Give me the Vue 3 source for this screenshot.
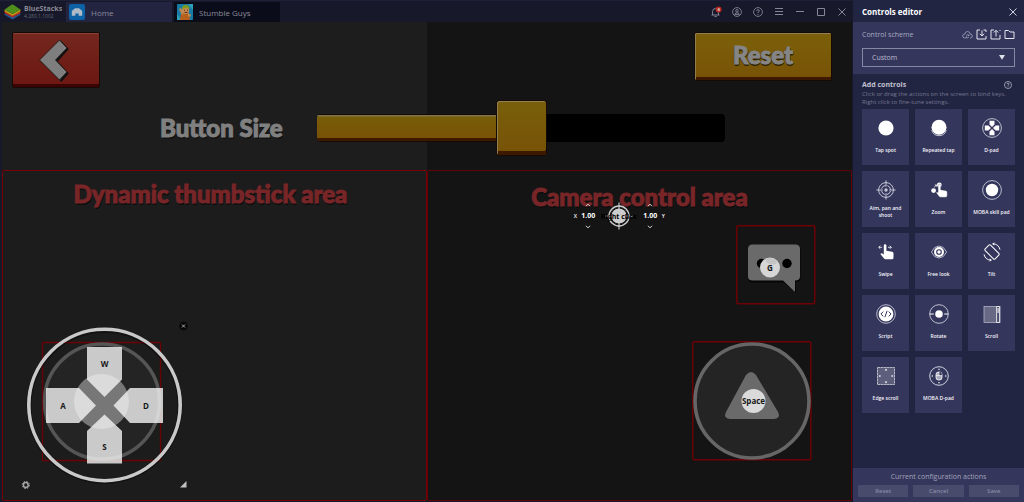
<script setup>
import { ref } from 'vue'

const size = ref(50)
const scheme = ref('Custom')
const sensX = ref('1.00')
const sensY = ref('1.00')

const tiles = [
  { icon: 'tap', label: 'Tap spot' },
  { icon: 'repeat', label: 'Repeated tap' },
  { icon: 'dpad', label: 'D-pad' },
  { icon: 'aim', label: 'Aim, pan and shoot' },
  { icon: 'zoom', label: 'Zoom' },
  { icon: 'skill', label: 'MOBA skill pad' },
  { icon: 'swipe', label: 'Swipe' },
  { icon: 'look', label: 'Free look' },
  { icon: 'tilt', label: 'Tilt' },
  { icon: 'script', label: 'Script' },
  { icon: 'rotate', label: 'Rotate' },
  { icon: 'scroll', label: 'Scroll' },
  { icon: 'edge', label: 'Edge scroll' },
  { icon: 'moba', label: 'MOBA D-pad' }
]
</script>

<template>
  <svg class="sprite" aria-hidden="true">
    <symbol id="tap" viewBox="0 0 20 20"><circle cx="10" cy="10" r="7.6" fill="#fff" /></symbol>
    <symbol id="repeat" viewBox="0 0 20 20">
      <circle cx="10" cy="9.3" r="7.5" fill="#fff" />
      <path d="M2.7 12.2a7.6 7.6 0 0 0 14.6 0" fill="none" stroke="#e4e4ee" stroke-width=".8" />
    </symbol>
    <symbol id="dpad" viewBox="0 0 20 20">
      <circle cx="10" cy="10" r="9.4" fill="none" stroke="#dcdce8" stroke-width=".8" />
      <path d="M7.5 2.8h5v3.6L10 9 7.5 6.4zM7.5 17.2h5v-3.6L10 11l-2.5 2.6zM2.8 7.5v5h3.6L9 10 6.4 7.5zM17.2 7.5v5h-3.6L11 10l2.6-2.5z" fill="#fff" />
    </symbol>
    <symbol id="aim" viewBox="0 0 20 20">
      <g fill="none" stroke="#d4d4e2" stroke-width=".9">
        <circle cx="10" cy="10" r="7.4" /><circle cx="10" cy="10" r="4.6" stroke-dasharray="5.2 2" stroke-dashoffset="-1" />
        <path d="M10 .4v6.4M10 13.2v6.4M.4 10h6.4M13.2 10h6.4" />
      </g>
      <circle cx="10" cy="10" r="1.7" fill="#c5c5d5" />
    </symbol>
    <symbol id="zoom" viewBox="0 0 20 20">
      <circle cx="4.6" cy="10.6" r="2.4" fill="#fff" />
      <circle cx="10.3" cy="5" r="2.4" fill="#fff" />
      <path d="M5.2 7.2 7.4 5M7.4 5H5.8M7.4 5v1.6" stroke="#fff" stroke-width=".8" fill="none" />
      <path d="M9.1 5.5a1.3 1.3 0 0 1 2.6 0v4.2l5.4 1q1.2.3 1.1 1.5v3.2q0 1.8-1.2 1.8h-5.4q-1 0-1.6-.8l-2.9-3.8q.8-1 2-.2z" fill="#fff" stroke="#34365c" stroke-width=".3" />
    </symbol>
    <symbol id="skill" viewBox="0 0 20 20">
      <circle cx="10" cy="10" r="9.4" fill="none" stroke="#dcdce8" stroke-width=".8" /><circle cx="10" cy="10" r="6.2" fill="#fff" />
    </symbol>
    <symbol id="swipe" viewBox="0 0 20 20">
      <path d="M7.8 3.6a1.3 1.3 0 0 1 2.6 0v5.2l5.7 1q1.4.3 1.4 1.6v4.4q0 1.5-1.4 1.5H9.6q-1 0-1.6-.8l-3.6-4.5q.8-1.1 2-.4l1.4.9z" fill="#fff" />
      <path d="M2.9 5.3h3.2M4.3 3.7 2.7 5.3l1.6 1.6M12 5.3h3.2M13.8 3.7l1.6 1.6-1.6 1.6" fill="none" stroke="#fff" stroke-width=".8" />
    </symbol>
    <symbol id="look" viewBox="0 0 20 20">
      <path d="M2.4 10Q5.2 4 10 4t7.6 6Q14.8 16 10 16t-7.6-6z" fill="none" stroke="#d8d8e4" stroke-width=".8" />
      <circle cx="10" cy="10" r="5" fill="#fff" /><circle cx="10" cy="10" r="2.3" fill="#fff" stroke="#34365c" stroke-width="1.1" />
    </symbol>
    <symbol id="tilt" viewBox="0 0 20 20">
      <g fill="none" stroke="#fff" stroke-width="1">
        <rect x="6.2" y="3" width="7.6" height="14" rx="1.2" transform="rotate(-45 10 10)" />
        <path d="M10.8 1.8q5.8.2 7.2 5.8M9.2 18.2q-5.8-.2-7.2-5.8M12.4.9 10.8 1.8l1.2 1.4M7.6 19.1l1.6-.9L8 16.8" />
      </g>
    </symbol>
    <symbol id="script" viewBox="0 0 20 20">
      <circle cx="10" cy="10" r="9.3" fill="none" stroke="#dcdce8" stroke-width=".8" /><circle cx="10" cy="10" r="7.4" fill="#fff" />
      <path d="M7.3 7.6 4.9 10l2.4 2.4M12.7 7.6l2.4 2.4-2.4 2.4M11.1 6.8 8.9 13.2" fill="none" stroke="#34365c" />
    </symbol>
    <symbol id="rotate" viewBox="0 0 20 20">
      <circle cx="10" cy="10" r="9.3" fill="none" stroke="#e4e4ee" stroke-width=".8" />
      <path d="M.8 10h4M15.2 10h4" stroke="#fff" /><circle cx="10" cy="10" r="3.8" fill="#fff" />
    </symbol>
    <symbol id="scroll" viewBox="0 0 20 20">
      <rect x="2" y="2.5" width="16" height="16" fill="#686985" stroke="#b0b0c2" stroke-width=".8" />
      <path d="M14.6 2.5v16h3v-16z" fill="#4c4e70" stroke="#fff" stroke-width=".8" /><path d="M16.1 4v5" stroke="#fff" />
    </symbol>
    <symbol id="edge" viewBox="0 0 20 20">
      <rect x="1.5" y="1.5" width="17" height="17" fill="#5c5e7c" stroke="#c4c4d2" stroke-width=".9" stroke-dasharray="2.6 .4" />
      <path d="M10 2.6 11.3 4.4H8.7zM10 17.4l1.3-1.8H8.7zM2.6 10l1.8-1.3v2.6zM17.4 10l-1.8-1.3v2.6z" fill="#fff" />
    </symbol>
    <symbol id="moba" viewBox="0 0 20 20">
      <circle cx="10" cy="10" r="9.3" fill="none" stroke="#e4e4ee" stroke-width=".9" />
      <rect x="7" y="6" width="6" height="8" rx="2.6" fill="#a9a9bc" stroke="#fff" stroke-width=".8" />
      <path d="M10 6h1.4Q13 6.6 13 9.4h-3z" fill="#34365c" /><path d="M10 6v3.6M7 9.6h6" stroke="#fff" stroke-width=".7" />
      <path d="m10 2.2 1 1.5H9zM10 17.8l1-1.5H9zM2.2 10l1.5-1v2zM17.8 10l-1.5-1v2z" fill="#fff" />
    </symbol>
    <symbol id="help" viewBox="0 0 10 10">
      <circle cx="5" cy="5" r="4.4" fill="none" stroke="currentColor" stroke-width=".9" />
      <path d="M3.6 4q.1-1.3 1.4-1.3T6.4 3.9Q6.4 4.6 5 5.2V6" fill="none" stroke="currentColor" stroke-width=".9" />
      <circle cx="5" cy="7.3" r=".6" fill="currentColor" />
    </symbol>
    <symbol id="cross" viewBox="0 0 10 10"><path d="m1.5 1.5 7 7M8.5 1.5l-7 7" stroke="currentColor" fill="none" /></symbol>
  </svg>

  <div class="app">
    <main class="player">
      <header class="bar">
        <div class="brand">
          <svg width="17" height="16" viewBox="0 0 17 16" aria-hidden="true">
            <path d="M.6 10.8 8.5 15.4 16.4 10.8V9.4L8.5 13 .6 9.4z" fill="#1d5b9b" />
            <path d="M.6 9.2 8.5 13.6 16.4 9.2V7.6L8.5 11 .6 7.6z" fill="#b52d24" />
            <path d="M.6 7.4 8.5 11.8 16.4 7.4V5.6L8.5 10 .6 5.6z" fill="#c09c12" />
            <path d="M.6 5.6 7.4.8q1-.5 2 0l7 4.8-6.9 4q-1 .5-2 0z" fill="#4f8e1c" />
          </svg>
          <div class="names"><strong>BlueStacks</strong><span>4.280.1.1002</span></div>
        </div>
        <nav class="tabs">
          <a href="#home" class="tab home">
            <svg width="16" height="16" viewBox="0 0 16 16" aria-hidden="true">
              <rect width="16" height="16" rx="2" fill="#0d62a5" />
              <path d="M2.8 7 6 4.2h4L13.2 7v4.8H9.6V9.4H6.4v2.4H2.8z" fill="#aebac6" />
            </svg>Home</a>
          <a href="#game" class="tab game-tab">
            <svg width="16" height="16" viewBox="0 0 16 16" aria-hidden="true">
              <rect width="16" height="16" rx="1" fill="#177ba5" />
              <path d="M0 10 5 16H0zM11 0h5v6z" fill="#2fa0b8" />
              <path d="M4 10q4-3 8 0l1 6H3z" fill="#b5601c" />
              <path d="M2 5l2-1 2 6-1 1zM11 9l3 2-1 2-2-1z" fill="#c98a4c" />
              <circle cx="8.5" cy="6.5" r="3.6" fill="#c7894f" />
              <path d="M4.8 5q.2-4 4-4 3.6 0 3.8 4L9 4z" fill="#7d9a22" />
              <path d="M7 6.2h1M10 6.2h1M7.5 8.4h3" stroke="#46281c" stroke-width=".9" />
            </svg>Stumble Guys</a>
        </nav>
        <div class="window">
          <button aria-label="Notifications">
            <svg width="12" height="12" viewBox="0 0 12 12"><path d="M1.5 9h8M2.6 9V5.4q.2-3 3-3 2.6 0 2.8 3V9M4.500 10.600h2.200" fill="none" stroke="currentColor" /><circle cx="8.600" cy="3.600" r="3" fill="#b5291f" /><path d="M9 2 7.600 4.100h2.200M9.100 2.200v3" fill="none" stroke="#ddd" stroke-width=".7" /></svg>
          </button>
          <button aria-label="Account">
            <svg width="10" height="10" viewBox="0 0 10 10" fill="none" stroke="currentColor"><circle cx="5" cy="5" r="4.4" stroke-width=".9" /><circle cx="5" cy="3.8" r="1.3" stroke-width=".9" /><path d="M2.8 7.5q.2-1.8 2.2-1.8t2.2 1.8z" stroke-width=".9" /></svg>
          </button>
          <button aria-label="Help"><svg width="10" height="10"><use href="#help" /></svg></button>
          <button aria-label="Menu"><svg width="10" height="10" viewBox="0 0 10 10"><path d="M1 1.500h8M1 4.500h8M1 7.500h8" stroke="currentColor" /></svg></button>
          <button aria-label="Minimize"><svg width="10" height="10" viewBox="0 0 10 10"><path d="M1 4.500h8" stroke="currentColor" /></svg></button>
          <button aria-label="Maximize"><svg width="10" height="10" viewBox="0 0 10 10"><path d="M1.500 1.500h7v7h-7z" stroke="currentColor" fill="none" /></svg></button>
          <button aria-label="Close"><svg width="10" height="10"><use href="#cross" /></svg></button>
        </div>
      </header>

      <div class="game">
        <section class="settings">
          <div class="row">
            <button class="block back" aria-label="Back">
              <svg width="32" height="44" viewBox="0 0 32 44"><path d="M22 1.500 1.500 22 22.500 43 30 34.500 19 22.500 30 10z" fill="#111" transform="translate(.8 1)" /><path d="M21.500 2 1.500 22 21.500 42 29 34 17.500 22 29 10z" fill="#7e7e7e" stroke="#1a1212" stroke-width=".8" /></svg>
            </button>
            <button class="block reset">Reset</button>
          </div>
          <div class="size">
            <label for="size">Button Size</label>
            <input id="size" v-model="size" type="range" min="0" max="100" :style="{ '--fill': size + '%' }">
          </div>
        </section>

        <section class="areas">
          <div class="area left">
            <h2>Dynamic thumbstick area</h2>
            <svg class="stick" width="172" height="174" viewBox="18 318 172 174">
              <rect x="42.500" y="342.500" width="118" height="118" rx="1" fill="none" stroke="#6c0004" stroke-width="1.300" />
              <circle cx="102" cy="401.500" r="57.500" fill="#242424" stroke="#555" stroke-width="3.500" />
              <circle cx="104.500" cy="406" r="75.500" fill="none" stroke="#000" stroke-opacity=".35" stroke-width="5" />
              <circle cx="104.500" cy="405" r="75.700" fill="none" stroke="#c9c9c9" stroke-width="3.600" />
              <circle cx="101.500" cy="401.500" r="27.500" fill="#777" />
              <path d="M87 347h35v32.500l-17.500 17.500L87 379.500zM87 463.500h35V431l-17.500-16.500L87 431zM46 388v35h33l17-17.500L79 388zM163 388v35h-33l-16.500-17.500L130 388z" fill="#f4f4f4" fill-opacity=".8" />
              <g><text x="104.500" y="367">W</text><text x="63" y="408.500">A</text><text x="146" y="408.500">D</text><text x="104.500" y="450">S</text></g>
              <circle cx="183.500" cy="326" r="4.300" fill="#080808" />
              <path d="m182 324.500 3 3M185 324.500l-3 3" stroke="#bbb" stroke-width=".9" />
              <circle cx="25.800" cy="485" r="2.400" fill="none" stroke="#a5a5a5" stroke-width="1.500" />
              <circle cx="25.800" cy="485" r="3.600" fill="none" stroke="#a5a5a5" stroke-width="1" stroke-dasharray="1.500 1.330" />
              <path d="M186.500 481v6.500h-6.500z" fill="#c0c0c0" />
            </svg>
          </div>
          <div class="area right">
            <h2>Camera control area</h2>
            <div class="aim">
              <label for="sx">X</label>
              <div class="step">
                <button aria-label="Increase X"><svg width="6" height="4" viewBox="0 0 6 4"><path d="m.8 3.200 2.200-2 2.200 2" fill="none" stroke="#ccc" /></svg></button>
                <input id="sx" v-model="sensX">
                <button aria-label="Decrease X"><svg width="6" height="4" viewBox="0 0 6 4"><path d="m.8.8 2.200 2 2.200-2" fill="none" stroke="#ccc" /></svg></button>
              </div>
              <svg class="target" width="42" height="30" viewBox="0 0 42 30">
                <circle cx="21" cy="15" r="10" fill="none" stroke="#ccc" stroke-width="1.400" />
                <circle cx="21" cy="15" r="8" fill="#ccc" stroke="#111" stroke-width="1" />
                <path d="M21 1.500v7M21 21.500v7M7.500 15h6M28.500 15h6" stroke="#ddd" />
                <text x="21" y="18">Right click</text>
              </svg>
              <div class="step">
                <button aria-label="Increase Y"><svg width="6" height="4" viewBox="0 0 6 4"><path d="m.8 3.200 2.200-2 2.200 2" fill="none" stroke="#ccc" /></svg></button>
                <input id="sy" v-model="sensY">
                <button aria-label="Decrease Y"><svg width="6" height="4" viewBox="0 0 6 4"><path d="m.8.8 2.200 2 2.200-2" fill="none" stroke="#ccc" /></svg></button>
              </div>
              <label for="sy">Y</label>
            </div>
            <svg class="chat" width="80" height="80" viewBox="0 0 80 80">
              <rect x=".8" y=".8" width="78" height="78" rx="1.500" fill="none" stroke="#6c0004" stroke-width="1.500" />
              <path d="M17 20h43q4.500 0 4.500 5v28q0 4-5 4l.5 11-12-10.500H17q-4.500 0-4.500-4V24q0-4 4.500-4z" fill="#050505" />
              <path d="M16.500 19.500h43q4.500 0 4.500 4.500v27.500q0 4-5 4v11.500L47 55.500H16.500q-4.500 0-4.500-4V24q0-4.500 4.500-4.500z" fill="#6a6a6a" />
              <circle cx="25.500" cy="38.500" r="4.700" /><circle cx="51" cy="38.500" r="4.700" />
              <circle cx="34" cy="42.500" r="10" fill="#d6d6d6" /><path d="M29 34q2 7 11 5l1-3q-6-5-12-2z" fill="#c4c4c4" />
              <text x="34" y="46">G</text>
            </svg>
            <svg class="jump" width="120" height="120" viewBox="0 0 120 120">
              <rect x=".8" y=".8" width="118" height="118" rx="1.500" fill="none" stroke="#6c0004" stroke-width="1.500" />
              <circle cx="60" cy="60" r="57" fill="#242424" stroke="#666" stroke-width="3.600" />
              <path d="M54 34q5-6 10 0l22 37q3 6-4 7H38q-7-1-4-7z" fill="#6a6a6a" />
              <circle cx="61.500" cy="60" r="12" fill="#dadada" />
              <text x="61.500" y="63">Space</text>
            </svg>
          </div>
        </section>
      </div>
    </main>

    <aside class="editor">
      <header class="title"><h1>Controls editor</h1><button aria-label="Close editor"><svg width="10" height="10"><use href="#cross" /></svg></button></header>
      <section class="scheme">
        <div class="line">
          <label for="scheme">Control scheme</label>
          <div class="tools">
            <button aria-label="Cloud sync"><svg width="11" height="10" viewBox="0 0 11 10" fill="none" stroke="#a5a5bb" stroke-width=".8"><path d="M3.500 8H2.600Q.6 7.800.6 6T2.800 4.200Q3 1.500 5.500 1.500T8.200 4.200Q10.400 4.200 10.400 6T8.500 8H8M4.200 5.400q1.500-1.400 2.700.1M6.800 7.200q-1.400 1.400-2.700 0M7 4.500v1.200H5.800M4 8.200V7h1.200" /></svg></button>
            <button aria-label="Import"><svg width="11" height="11" viewBox="0 0 11 11" fill="none" stroke="#e6e6f0"><path d="M4 1H1v9h9V7M7.500 1H10v2M6 1.500v5M3.800 4.800 6 7l2.200-2.200" /></svg></button>
            <button aria-label="Export"><svg width="11" height="11" viewBox="0 0 11 11" fill="none" stroke="#e6e6f0"><path d="M4 1H1v9h9V6M10 1v1M6 7.500v-6M3.800 3.500 6 1.300l2.200 2.200" /></svg></button>
            <button aria-label="Open folder"><svg width="11" height="11" viewBox="0 0 11 11" fill="none" stroke="#e6e6f0"><path d="M1 1.500h3.500L6 3h4v6.500H1z" /></svg></button>
          </div>
        </div>
        <div class="pick">
          <select id="scheme" v-model="scheme"><option>Custom</option></select>
          <svg width="6" height="5" viewBox="0 0 6 5" aria-hidden="true"><path d="M0 0h6L3 4.800z" fill="#e0e0ea" /></svg>
        </div>
      </section>
      <section class="add">
        <div class="line"><h2>Add controls</h2><button aria-label="About controls"><svg width="8" height="8"><use href="#help" /></svg></button></div>
        <p>Click or drag the actions on the screen to bind keys.<br>Right click to fine-tune settings.</p>
        <div class="tiles">
          <button v-for="t in tiles" :key="t.icon" class="tile">
            <svg width="20" height="20"><use :href="'#' + t.icon" /></svg>
            <span>{{ t.label }}</span>
          </button>
        </div>
      </section>
      <footer>
        <p>Current configuration actions</p>
        <div class="acts"><button>Reset</button><button>Cancel</button><button>Save</button></div>
      </footer>
    </aside>
  </div>
</template>

<style>
body { background: #171829; }
</style>

<style scoped>
* { box-sizing: border-box; }
.sprite { position: absolute; width: 0; height: 0; }
.app { display: grid; grid-template-columns: 1fr 171px; min-height: 100vh; font-family: "Open Sans", "Noto Sans", sans-serif; }
button { border: 0; padding: 0; background: none; color: inherit; font: inherit; display: grid; place-items: center; }
svg { display: block; flex: none; }
h1, h2, p { margin: 0; }

.player { display: flex; flex-direction: column; min-width: 0; background: #171829; }
.bar { display: flex; height: 22px; border-top: 1px solid #1e2037; color: #85869a; }
.brand { display: flex; align-items: center; gap: 3px; width: 66px; padding-left: 4px; }
.names { display: flex; flex-direction: column; color: #8b8b96; }
.names strong { font-size: 7px; line-height: 8px; }
.names span { font-size: 5px; line-height: 6px; color: #666778; }
.tabs { display: flex; gap: 2px; }
.tab { display: flex; align-items: center; gap: 6px; width: 106px; padding: 0 3px; margin-top: 1px; font-size: 8px; color: #8a8b9c; text-decoration: none; background: #222440; }
.game-tab { background: #0b0c19; }
.window { display: flex; margin-left: auto; padding-right: 1px; }
.window button { width: 21px; }

.game { flex: 1; display: flex; flex-direction: column; padding: 0 1px 1px 2px; }
.settings { height: 148px; padding: 10px 20px 0 10px; background: linear-gradient(90deg, #1d1d1d 50%, #141414 50%); }
.row { display: flex; justify-content: space-between; align-items: flex-start; height: 68px; }
.block { border-radius: 2px; border: 1px solid #170a05; }
.back { width: 88px; height: 56px; padding-right: 4px; background: linear-gradient(#74281f, #6f1f17 50%, #6d1712); box-shadow: inset 0 1px #8b4136, inset 0 -3px #3c0503; }
.reset, .size label, .area h2 { font: 900 24px/30px Lato, sans-serif; -webkit-text-stroke: 1px currentColor; }
.reset { width: 138px; height: 49px; padding-bottom: 4px; color: #858585; text-shadow: 1px 1px #302406, -1px 0 #4d3b0a, 0 2px #302406; background: linear-gradient(#7b600a, #785207); box-shadow: inset 1px 1px #8e8053, inset 0 -3px #3e1902; }
.size { display: flex; align-items: center; padding: 0 107px 0 148px; gap: 32px; }
.size label { width: 125px; color: #808080; white-space: nowrap; text-shadow: 1px 2px #111; }
.size input { appearance: none; flex: 1; min-width: 0; height: 56px; margin: 0; background: none; }
.size input::-webkit-slider-runnable-track {
  height: 28px; border-radius: 4px;
  background: linear-gradient(#170a04 1px, #80744a 1px 2px, #785d09 3px, #785207 24px, #3e1902 24px 27px, #170a04 27px) 0 0 / var(--fill) 100% no-repeat, #000;
}
.size input::-webkit-slider-thumb { appearance: none; width: 51px; height: 56px; margin-top: -14px; border-radius: 3px; border: 1px solid #170a04; background: linear-gradient(#785f0b, #785207); box-shadow: inset 1px 1px #8e8053, inset 0 -4px #3e1902; }

.areas { flex: 1; display: grid; grid-template-columns: 1fr 1fr; min-height: 331px; }
.area { position: relative; border: 1px solid #760006; border-radius: 2px; background: #1c1c1c; text-align: center; }
.right { background: #141414; border-color: #620007; }
.area h2 { padding-top: 8px; color: #782528; text-shadow: 1px 2px #0e0e0e; }
.left h2 { padding-right: 8px; }
.right h2 { padding-top: 11px; }
.stick { position: absolute; left: 15px; bottom: 8px; }
text { text-anchor: middle; font-family: "Open Sans", sans-serif; font-weight: 700; font-size: 8px; fill: #181818; }
.target { overflow: visible; }
.target text { font-size: 7px; fill: #000; }
.chat { position: absolute; right: 35px; top: 54px; }
.jump { position: absolute; right: 39px; bottom: 39px; }
.aim { position: absolute; left: 45%; top: 30px; width: 98px; margin-left: -48px; display: flex; align-items: center; justify-content: center; color: #ddd; }
.aim label { width: 6px; font-size: 5px; font-weight: 700; }
.step { width: 20px; display: flex; flex-direction: column; align-items: center; gap: 4px; }
.step input { width: 20px; height: 10px; padding: 0; border: 0; background: none; color: #fff; text-align: center; font: 700 7px/10px "Open Sans", sans-serif; }

.editor { display: flex; flex-direction: column; background: #222542; color: #fff; }
.title { display: flex; justify-content: space-between; align-items: center; height: 22px; padding: 1px 6px 0 9px; color: #d0d0de; }
.title h1 { font-size: 8px; color: #fff; }
.scheme { height: 52px; padding: 6px 9px 0; background: #34365c; }
.line { display: flex; justify-content: space-between; align-items: center; }
.line label { font-size: 7px; line-height: 12px; color: #a9aac2; }
.tools { display: flex; gap: 3px; }
.pick { position: relative; margin-top: 7px; }
.scheme .line { height: 13px; }
.pick select { display: block; appearance: none; width: 100%; height: 19px; padding: 0 9px; border: 1px solid #8687a3; border-radius: 0; background: transparent; color: #bcbcd0; font: 7px/17px "Open Sans", sans-serif; }
.pick svg { position: absolute; right: 10px; top: 7px; }
.add { flex: 1; padding: 5px 9px 0; }
.add .line { height: 11px; padding-right: 3px; color: #c0c0d0; }
.add h2 { font-size: 7px; line-height: 11px; }
.add p { font-size: 6px; line-height: 8px; color: #74768f; white-space: nowrap; }
.tiles { display: grid; grid-template-columns: repeat(3, 1fr); gap: 6px; margin-top: 3px; }
.tile { display: flex; flex-direction: column; align-items: center; height: 56px; padding-top: 9px; gap: 5px; background: #34365c; }
.tile span { display: flex; align-items: center; height: 14px; max-width: 38px; font-size: 5px; line-height: 7px; font-weight: 600; color: #f4f4fa; text-align: center; white-space: normal; }
footer { height: 34px; padding: 3px 5px 0; background: #34365c; text-align: center; }
footer p { font-size: 7px; line-height: 11px; color: #a2a3bb; }
.acts { display: grid; grid-template-columns: repeat(3, 1fr); gap: 5px; margin-top: 3px; }
.acts button { height: 12px; background: #494b6d; color: #8788a4; font-size: 6px; font-weight: 600; }
</style>
